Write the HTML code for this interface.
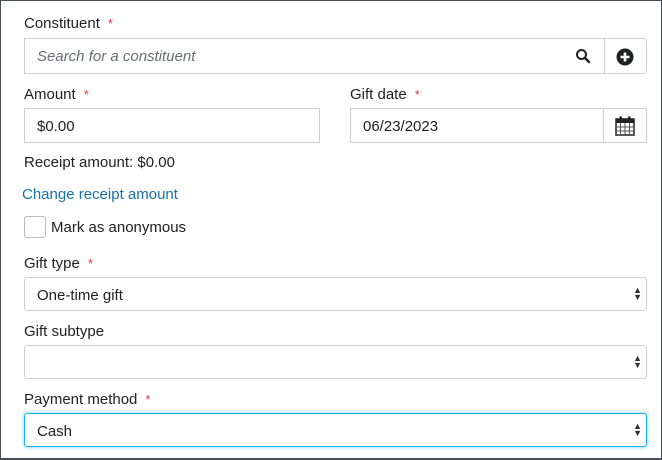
<!DOCTYPE html>
<html><head><style>
body{margin:0;width:662px;height:460px;overflow:hidden;background:#fff;font-family:"Liberation Sans",sans-serif;font-size:15px;color:#212121}
.frame{position:absolute;left:0;top:0;width:660px;height:457px;border:1px solid #4a4d52;border-bottom-width:2px;box-sizing:content-box}
.a{position:absolute}
.lbl{position:absolute;line-height:20px}
.req{color:#e0394b;margin-left:8px;font-size:13px}
.box{position:absolute;border:1px solid #cdcfd2;box-sizing:border-box;background:#fff}
.txt{position:absolute;line-height:20px}
.arr{position:absolute;right:4px;top:9px;font-size:9px;line-height:7px;color:#333}
</style></head><body>
<div class="frame"></div>
<div class="lbl" style="left:24px;top:14px">Constituent<span class="req">*</span></div>
<div class="box" style="left:24px;top:38px;width:581px;height:36px"></div>
<div class="txt" style="left:37px;top:47px;font-style:italic;color:#686c73">Search for a constituent</div>
<svg class="a" style="left:575px;top:48px" width="16" height="16" viewBox="0 0 16 16"><circle cx="6.5" cy="6.5" r="4.5" fill="none" stroke="#222" stroke-width="2"/><path d="M10 10l4 4" stroke="#222" stroke-width="2.4" stroke-linecap="round"/></svg>
<div class="box" style="left:604px;top:38px;width:43px;height:36px;border-radius:0 3px 3px 0"></div>
<svg class="a" style="left:616px;top:48px" width="18" height="18" viewBox="0 0 18 18"><circle cx="9" cy="9" r="8.5" fill="#1f2124"/><path d="M9 4.5v9M4.5 9h9" stroke="#fff" stroke-width="2.6"/></svg>
<div class="lbl" style="left:24px;top:85px">Amount<span class="req">*</span></div>
<div class="box" style="left:24px;top:108px;width:296px;height:35px"></div>
<div class="txt" style="left:37px;top:117px">$0.00</div>
<div class="lbl" style="left:350px;top:85px">Gift date<span class="req">*</span></div>
<div class="box" style="left:350px;top:108px;width:297px;height:35px"></div>
<div class="a" style="left:603px;top:108px;width:1px;height:35px;background:#cdcfd2"></div>
<div class="txt" style="left:363px;top:117px">06/23/2023</div>
<svg class="a" style="left:615px;top:116px" width="20" height="20" viewBox="0 0 20 20"><rect x="1" y="3" width="18" height="16" fill="#fff" stroke="#222" stroke-width="1.5"/><rect x="1" y="3" width="18" height="4" fill="#222"/><path d="M1 11h18M1 15h18M5.5 7v12M10 7v12M14.5 7v12" stroke="#555" stroke-width="1"/><rect x="4.5" y="0.5" width="2.5" height="4" fill="#222"/><rect x="13" y="0.5" width="2.5" height="4" fill="#222"/></svg>
<div class="lbl" style="left:24px;top:153px">Receipt amount: $0.00</div>
<div class="lbl" style="left:22px;top:185px;color:#1870a6">Change receipt amount</div>
<div class="box" style="left:24px;top:216px;width:22px;height:22px;border-radius:3px;border-color:#b8bbbf"></div>
<div class="lbl" style="left:51px;top:218px">Mark as anonymous</div>
<div class="lbl" style="left:24px;top:254px">Gift type<span class="req">*</span></div>
<div class="box" style="left:24px;top:277px;width:623px;height:34px;border-radius:3px"><div class="arr">▲<br>▼</div></div>
<div class="txt" style="left:37px;top:286px">One-time gift</div>
<div class="lbl" style="left:24px;top:322px">Gift subtype</div>
<div class="box" style="left:24px;top:345px;width:623px;height:34px;border-radius:3px"><div class="arr">▲<br>▼</div></div>
<div class="lbl" style="left:24px;top:390px">Payment method<span class="req">*</span></div>
<div class="box" style="left:24px;top:413px;width:623px;height:34px;border-radius:3px;border-color:#1cb1e6;box-shadow:0 0 4px rgba(28,177,230,.6)"><div class="arr">▲<br>▼</div></div>
<div class="txt" style="left:37px;top:422px">Cash</div>
</body></html>
